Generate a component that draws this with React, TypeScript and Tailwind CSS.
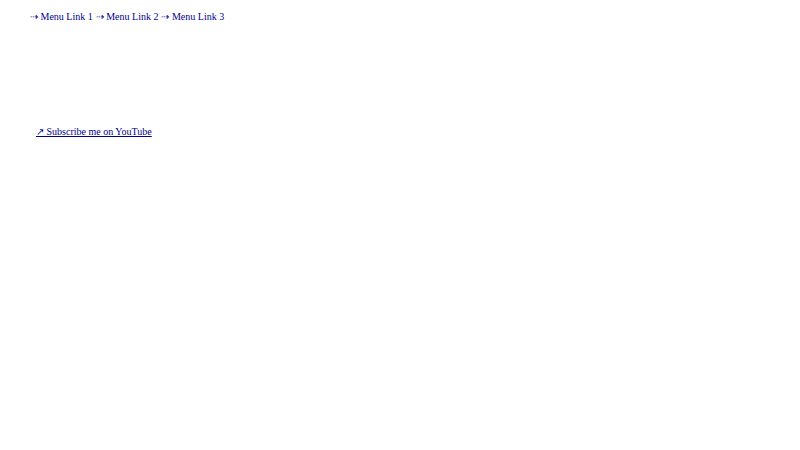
export default function App() {
  const links = ['Menu Link 1', 'Menu Link 2', 'Menu Link 3'];
  return (
    <div className="min-h-[450px] bg-white font-['Liberation_Serif',serif] text-[10px]">
      {/* Top menu */}
      <nav className="flex gap-[3px] pl-[30px] pt-[11px] leading-[12px]">
        {links.map((label) => (
          <a key={label} href="#" className="text-[#00008b] no-underline">
            ⇢ {label}
          </a>
        ))}
      </nav>

      {/* Subscribe link */}
      <div className="pl-[36px] pt-[103px] leading-[12px]">
        <a href="#" className="text-[#00008b] underline">
          ↗ Subscribe me on YouTube
        </a>
      </div>
    </div>
  );
}
